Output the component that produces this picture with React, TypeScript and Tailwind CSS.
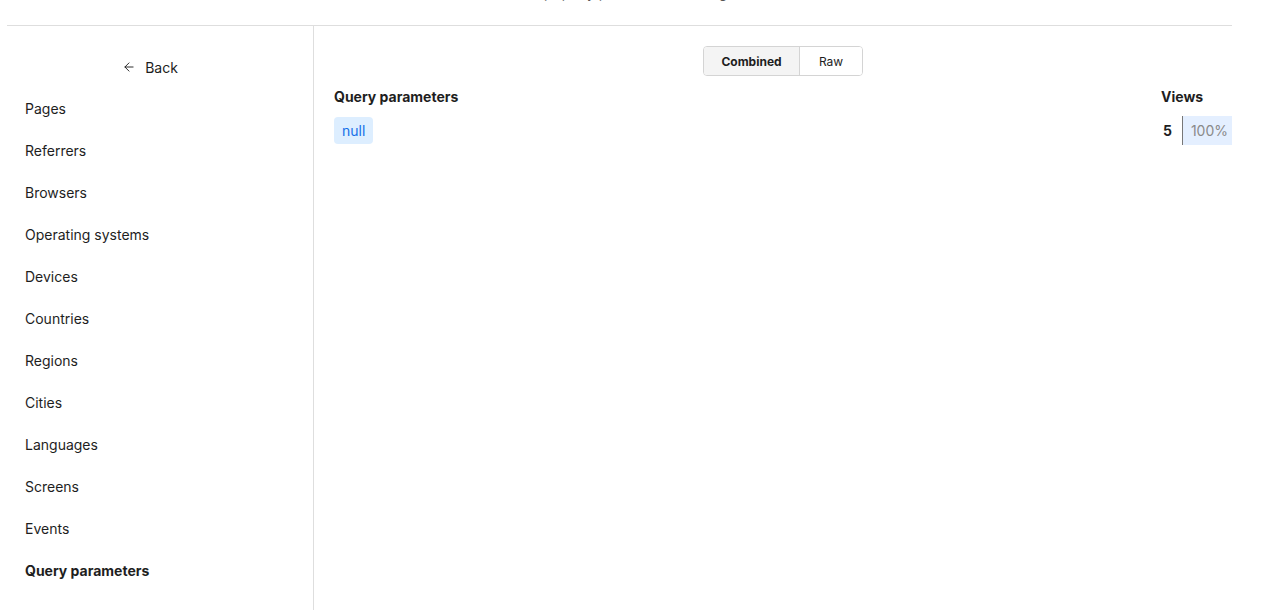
import React from 'react';
import { ArrowLeft } from 'lucide-react';

const menuItems = [
  'Pages',
  'Referrers',
  'Browsers',
  'Operating systems',
  'Devices',
  'Countries',
  'Regions',
  'Cities',
  'Languages',
  'Screens',
  'Events',
  'Query parameters',
];

const App: React.FC = () => {
  const active = 'Query parameters';

  return (
    <div className="w-[1264px] h-[610px] overflow-hidden bg-white text-[#1e1e1e] font-['Inter','Liberation_Sans',sans-serif]">
      {/* Header, scrolled mostly out of view */}
      <div className="ml-[7px] w-[1225px] h-[26px] border-b border-[#dedede] overflow-hidden flex justify-center">
        <div className="-mt-[17px] pl-[16px] text-[14px] leading-[20px] text-[#555]">Top query parameters ranking</div>
      </div>

      <div className="ml-[7px] w-[1225px] flex h-[584px]">
        {/* Sidebar */}
        <div className="w-[307px] shrink-0 border-r border-[#dedede] pl-[18px] pr-[40px]">
          <button className="mt-[30px] h-[22px] w-full flex items-center justify-center gap-[9px] text-[14px] pl-[2px]">
            <ArrowLeft size={14} strokeWidth={1.6} />
            <span>Back</span>
          </button>
          <nav className="mt-[21px] flex flex-col">
            {menuItems.map((item) => (
              <div
                key={item}
                className={`h-[42px] flex items-start text-[14px] leading-[20px] ${
                  item === active ? 'font-bold' : ''
                }`}
              >
                {item}
              </div>
            ))}
          </nav>
        </div>

        {/* Main */}
        <div className="flex-1 pl-[20px]">
          <div className="mt-[20px] flex justify-center">
            <div className="flex h-[30px] border border-[#d4d4d4] rounded-[4px] overflow-hidden text-[12px] leading-[27px]">
              <button className="w-[96px] pt-[1px] bg-[#f4f4f4] font-bold border-r border-[#d4d4d4]">Combined</button>
              <button className="w-[62px] pt-[1px] bg-white">Raw</button>
            </div>
          </div>

          <div className="mt-[10px] flex items-center justify-between h-[20px] text-[14px] font-bold">
            <div>Query parameters</div>
            <div className="w-[71px]">Views</div>
          </div>

          <div className="mt-[10px] flex items-center justify-between h-[29px]">
            <div className="h-[27px] px-[8px] flex items-center rounded-[4px] bg-[#ddeeff] text-[#1570e8] text-[14px]">
              null
            </div>
            <div className="flex items-center h-[29px]">
              <div className="w-[21px] text-right text-[14px] font-bold">5</div>
              <div className="ml-[10px] w-[50px] h-[29px] border-l border-[#777] bg-[#e4efff] flex items-center justify-end pr-[4px] text-[14px] text-[#8a8a8a]">
                100%
              </div>
            </div>
          </div>
        </div>
      </div>
    </div>
  );
};

export default App;
